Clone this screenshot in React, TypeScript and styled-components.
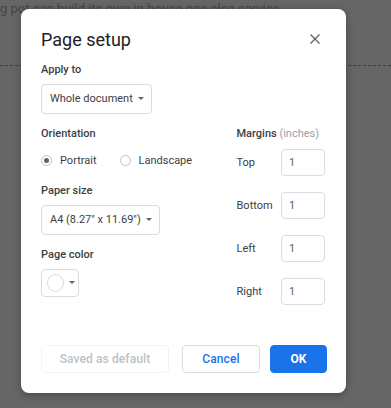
import React from "react";
import styled, { createGlobalStyle } from "styled-components";

const Global = createGlobalStyle`
  html, body { margin: 0; padding: 0; background: #666666; }
  body { font-family: Roboto, "Noto Sans", Arial, sans-serif; }
  * { box-sizing: border-box; }
`;

const Backdrop = styled.div`
  position: relative;
  width: 391px;
  height: 408px;
  overflow: hidden;
  background: #666666;
`;

const DocText = styled.div`
  font-size: 13px;
  line-height: 16px;
  color: #454545;
  white-space: nowrap;
  padding-top: 1px;
`;

const DashedRule = styled.div`
  margin-top: 48px;
  border-top: 1px dashed #3a3d48;
`;

const Dialog = styled.div`
  position: absolute;
  left: 21px;
  top: 9px;
  width: 325px;
  height: 383.5px;
  background: #ffffff;
  border-radius: 8px;
  box-shadow: 0 2px 8px rgba(0, 0, 0, 0.3);
  display: flex;
  flex-direction: column;
  padding: 19px 19px 20px 20px;
`;

const Header = styled.div`
  display: flex;
  align-items: center;
  justify-content: space-between;
  height: 24px;
`;

const Title = styled.h1`
  margin: 0;
  font-size: 18px;
  line-height: 24px;
  font-weight: 400;
  color: #202124;
`;

const CloseButton = styled.button`
  width: 24px;
  height: 24px;
  padding: 0;
  border: none;
  background: transparent;
  display: flex;
  align-items: center;
  justify-content: center;
  margin-top: -3px;
`;

const Section = styled.div<{ $top?: number }>`
  display: flex;
  flex-direction: column;
  align-items: flex-start;
  margin-top: ${(p) => p.$top ?? 12.5}px;
`;

const Label = styled.div`
  font-size: 11px;
  line-height: 16px;
  font-weight: 500;
  color: #3c4043;
  margin-bottom: 5.5px;
  white-space: nowrap;
`;

const Muted = styled.span`
  font-weight: 400;
  color: #9aa0a6;
`;

const SelectBox = styled.div`
  display: inline-flex;
  align-items: center;
  gap: 5px;
  height: 30px;
  padding: 0 7px 0 8px;
  border: 1px solid #dadce0;
  border-radius: 4px;
  font-size: 11px;
  color: #3c4043;
  white-space: nowrap;
`;

const Caret = styled.span<{ $w?: number }>`
  width: 0;
  height: 0;
  border-left: ${(p) => (p.$w ?? 7) / 2}px solid transparent;
  border-right: ${(p) => (p.$w ?? 7) / 2}px solid transparent;
  border-top: ${(p) => (p.$w ?? 7) / 2}px solid #5f6368;
`;

const RadioGroup = styled.div`
  display: flex;
  align-items: center;
  height: 20px;
  margin-top: 3px;
  gap: 23px;
`;

const RadioOption = styled.label`
  display: flex;
  align-items: center;
  gap: 8px;
  font-size: 11px;
  color: #3c4043;
`;

const RadioCircle = styled.span<{ $checked?: boolean }>`
  width: 11px;
  height: 11px;
  border-radius: 50%;
  border: 1px solid #bdc1c6;
  display: flex;
  align-items: center;
  justify-content: center;
  &::after {
    content: "";
    width: 5px;
    height: 5px;
    border-radius: 50%;
    background: ${(p) => (p.$checked ? "#5f6368" : "transparent")};
  }
`;

const Columns = styled.div`
  display: flex;
  justify-content: space-between;
  margin-top: 12.5px;
`;

const LeftCol = styled.div`
  display: flex;
  flex-direction: column;
  & > ${Section}:first-child {
    margin-top: 0;
  }
`;

const MarginsCol = styled.div`
  display: flex;
  flex-direction: column;
  width: 88.5px;
  margin-right: 2px;
`;

const MarginsGrid = styled.div`
  display: grid;
  grid-template-columns: 1fr 44px;
  row-gap: 16px;
  align-items: center;
  margin-top: 1px;
`;

const MarginLabel = styled.div`
  font-size: 11px;
  color: #3c4043;
`;

const MarginInput = styled.div`
  height: 27px;
  border: 1px solid #dadce0;
  border-radius: 4px;
  padding-left: 7px;
  display: flex;
  align-items: center;
  font-size: 11px;
  color: #5f6368;
`;

const ColorButton = styled.div`
  display: inline-flex;
  align-items: center;
  gap: 5px;
  height: 28px;
  width: 38px;
  padding: 0 3px 0 5px;
  border: 1px solid #dadce0;
  border-radius: 4px;
`;

const Swatch = styled.span`
  width: 18px;
  height: 18px;
  border-radius: 50%;
  border: 1px solid #dadce0;
  background: #ffffff;
`;

const Footer = styled.div`
  margin-top: auto;
  display: flex;
  align-items: center;
`;

const Button = styled.button<{ $variant: "disabled" | "outline" | "primary"; $w: number }>`
  height: 28px;
  width: ${(p) => p.$w}px;
  border-radius: 4px;
  font-family: Roboto, Arial, sans-serif;
  font-size: 12px;
  letter-spacing: 0.1px;
  padding: 0;
  border: 1px solid
    ${(p) =>
      p.$variant === "disabled" ? "#f1f3f4" : p.$variant === "outline" ? "#dadce0" : "#1a73e8"};
  background: ${(p) => (p.$variant === "primary" ? "#1a73e8" : "#ffffff")};
  color: ${(p) =>
    p.$variant === "disabled" ? "#bdc1c6" : p.$variant === "outline" ? "#1a73e8" : "#ffffff"};
  font-weight: ${(p) => (p.$variant === "primary" ? 700 : 500)};
`;

const ButtonGroup = styled.div`
  margin-left: auto;
  display: flex;
  gap: 10px;
`;

export default function App() {
  const margins = ["Top", "Bottom", "Left", "Right"];
  return (
    <>
      <Global />
      <Backdrop>
        <DocText>g pot can build its own in-house one also service</DocText>
        <DashedRule />
        <Dialog>
          <Header>
            <Title>Page setup</Title>
            <CloseButton aria-label="Close">
              <svg width="10" height="10" viewBox="0 0 10 10">
                <path d="M0.5 0.5 L9.5 9.5 M9.5 0.5 L0.5 9.5" stroke="#5f6368" strokeWidth="1.4" fill="none" />
              </svg>
            </CloseButton>
          </Header>
          <Section $top={10}>
            <Label>Apply to</Label>
            <SelectBox>
              Whole document
              <Caret />
            </SelectBox>
          </Section>
          <Columns>
            <LeftCol>
              <Section>
                <Label>Orientation</Label>
                <RadioGroup>
                  <RadioOption>
                    <RadioCircle $checked />
                    Portrait
                  </RadioOption>
                  <RadioOption>
                    <RadioCircle />
                    Landscape
                  </RadioOption>
                </RadioGroup>
              </Section>
              <Section>
                <Label>Paper size</Label>
                <SelectBox>
                  A4 (8.27" x 11.69")
                  <Caret />
                </SelectBox>
              </Section>
              <Section>
                <Label>Page color</Label>
                <ColorButton>
                  <Swatch />
                  <Caret $w={6} />
                </ColorButton>
              </Section>
            </LeftCol>
            <MarginsCol>
              <Label>
                Margins <Muted>(inches)</Muted>
              </Label>
              <MarginsGrid>
                {margins.map((m) => (
                  <React.Fragment key={m}>
                    <MarginLabel>{m}</MarginLabel>
                    <MarginInput>1</MarginInput>
                  </React.Fragment>
                ))}
              </MarginsGrid>
            </MarginsCol>
          </Columns>
          <Footer>
            <Button $variant="disabled" $w={128}>Saved as default</Button>
            <ButtonGroup>
              <Button $variant="outline" $w={78}>Cancel</Button>
              <Button $variant="primary" $w={57}>OK</Button>
            </ButtonGroup>
          </Footer>
        </Dialog>
      </Backdrop>
    </>
  );
}
